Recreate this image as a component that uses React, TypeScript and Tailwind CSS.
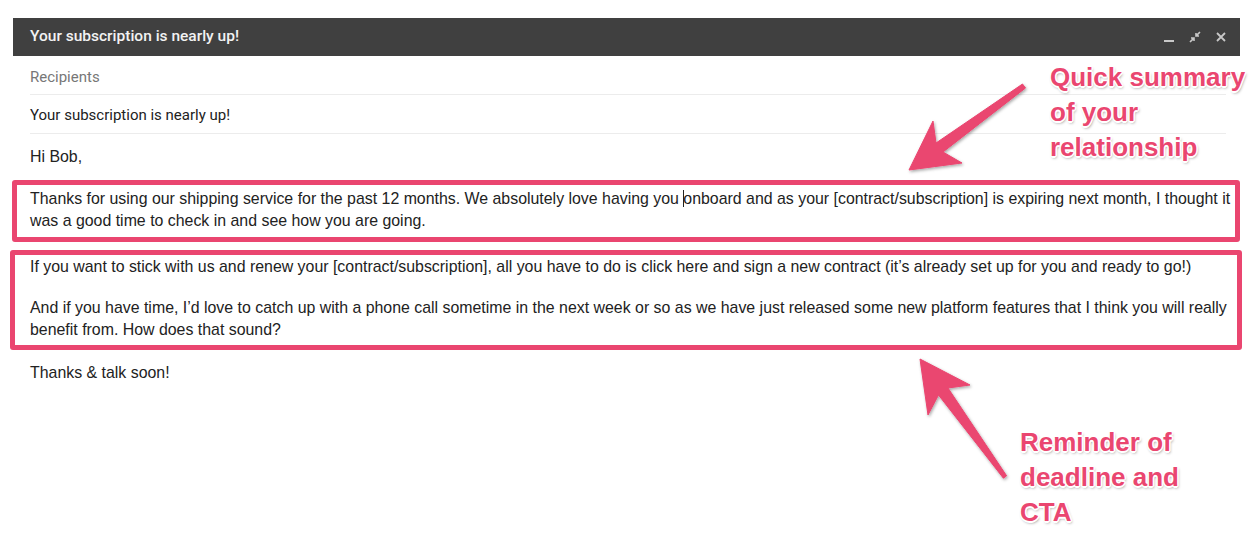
const outline =
  "[text-shadow:-1px_-1px_0_#fff,1px_-1px_0_#fff,-1px_1px_0_#fff,1px_1px_0_#fff,0_-1.5px_0_#fff,0_1.5px_0_#fff,1.5px_0_0_#fff,-1.5px_0_0_#fff,1px_2px_3px_rgba(0,0,0,0.45)]";

function HeaderIcons() {
  return (
    <div className="flex items-center gap-[14px] text-[#c8c8c8]">
      <svg viewBox="0 0 12 12" className="h-3 w-3" aria-hidden="true">
        <rect x="1" y="9" width="10" height="2" fill="currentColor" />
      </svg>
      <svg viewBox="0 0 12 12" className="h-3 w-3" aria-hidden="true">
        <path d="M11 1 7.6 4.4M7 2v3h3" stroke="currentColor" strokeWidth="1.6" fill="none" />
        <path d="M1 11l3.4-3.4M5 10V7H2" stroke="currentColor" strokeWidth="1.6" fill="none" />
      </svg>
      <svg viewBox="0 0 12 12" className="h-3 w-3" aria-hidden="true">
        <path d="M2 2l8 8M10 2l-8 8" stroke="currentColor" strokeWidth="1.8" fill="none" />
      </svg>
    </div>
  );
}

function Arrows() {
  return (
    <svg
      className="pointer-events-none absolute inset-0 h-full w-full"
      viewBox="0 0 1260 542"
      aria-hidden="true"
    >
      <defs>
        <filter id="sh" x="-20%" y="-20%" width="140%" height="140%">
          <feDropShadow dx="1" dy="1.5" stdDeviation="1.5" floodColor="#000" floodOpacity="0.35" />
        </filter>
      </defs>
      <g fill="#ea4670" stroke="#ea4670" strokeLinejoin="round" strokeWidth="1" filter="url(#sh)">
        <polygon points="909,170 933,121 936,143 1022.5,84 1025.5,88 943,152 962,163" />
        <polygon points="920,359 970,385 948,388 1006.6,475.8 1003.4,478.2 938.5,395 928,415" />
      </g>
    </svg>
  );
}

export default function App() {
  return (
    <div className="relative h-[542px] w-[1260px] overflow-hidden bg-white">
      <div className="ml-[13px] mt-[18px] w-[1227px]">
        <div className="flex h-[38px] items-center justify-between bg-[#404040] pl-[17px] pr-[13px]">
          <span className="font-['Roboto',sans-serif] text-[15.5px] font-medium text-[#f2f2f2]">
            Your subscription is nearly up!
          </span>
          <HeaderIcons />
        </div>

        <div className="pl-[17px] pr-[14px] font-['Liberation_Sans',Arial,sans-serif] text-[15.9px] leading-[22px] text-[#222]">
          <div className="flex h-[39px] items-center border-b border-[#ececec] pt-[3px] font-['Roboto',sans-serif] text-[15px] text-[#777]">
            Recipients
          </div>
          <div className="flex h-[39px] items-center border-b border-[#ececec] pt-[2px] font-['Roboto',sans-serif] text-[15px] text-[#222]">
            Your subscription is nearly up!
          </div>

          <p className="mt-[12px]">Hi Bob,</p>

          <div className="-ml-[18px] -mr-[14px] mt-[12px] rounded-[3px] border-[5px] border-[#ea4670] pb-[5px] pl-[13px] pr-[4px] pt-[3px]">
            <p>
              Thanks for using our shipping service for the past 12 months. We absolutely love having you{" "}
              <span className="-mr-px inline-block h-[17px] w-px bg-[#222] align-[-3px]" />
              onboard and as your [contract/subscription] is expiring next month, I thought it was a good time
              to check in and see how you are going.
            </p>
          </div>

          <div className="-ml-[20px] -mr-[16px] mt-[8px] rounded-[3px] border-[5px] border-[#ea4670] pb-[4px] pl-[15px] pr-[6px] pt-[1px]">
            <p>
              If you want to stick with us and renew your [contract/subscription], all you have to do is click
              here and sign a new contract (it’s already set up for you and ready to go!)
            </p>
            <p className="mt-[19px]">
              And if you have time, I’d love to catch up with a phone call sometime in the next week or so as we
              have just released some new platform features that I think you will really benefit from. How does
              that sound?
            </p>
          </div>

          <p className="mt-[12px]">Thanks &amp; talk soon!</p>
        </div>
      </div>

      <Arrows />

      <div
        className={`absolute left-[1050px] top-[60px] font-['Liberation_Sans',Arial,sans-serif] text-[26px] font-bold leading-[35px] text-[#ea4670] ${outline}`}
      >
        <div>Quick summary</div>
        <div>of your</div>
        <div>relationship</div>
      </div>

      <div
        className={`absolute left-[1020px] top-[425px] font-['Liberation_Sans',Arial,sans-serif] text-[26px] font-bold leading-[35px] text-[#ea4670] ${outline}`}
      >
        <div>Reminder of</div>
        <div>deadline and</div>
        <div>CTA</div>
      </div>
    </div>
  );
}
